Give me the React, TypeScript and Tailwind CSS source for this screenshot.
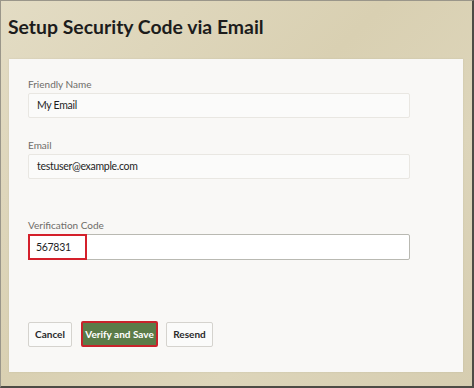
import React from "react";

export default function App() {
  const font = { fontFamily: 'Lato, "Noto Sans", sans-serif' };
  return (
    <div
      className="w-[474px] h-[388px] overflow-hidden border-t border-l border-t-[#9a968a] border-l-[#9a968a] border-r-2 border-b-2 border-r-[#4d4b45] border-b-[#4d4b45] bg-[linear-gradient(135deg,#e3dcc4_0%,#d9d0b2_45%,#ddd5ba_70%,#d6cdb0_100%)] flex flex-col"
      style={font}
    >
      <h1 className="pl-[7px] pt-[13px] h-[58px] text-[19.4px] font-bold text-[#1c1c1c] leading-[26px] whitespace-nowrap">
        Setup Security Code via Email
      </h1>
      <div className="ml-[8px] w-[454px] h-[313px] bg-[#f9f8f6] shadow-[0_0_2px_rgba(0,0,0,0.08)] pl-[19px] flex flex-col">
        <label className="mt-[19px] text-[10px] leading-[12px] text-[#6e6c68]">Friendly Name</label>
        <div className="mt-[3px] w-[382px] h-[25px] border border-[#e9e7e2] bg-[#fbfbfa] rounded-[2px] flex items-center pl-[8px] pt-[1px] text-[10.5px] tracking-[-0.3px] text-[#1e1e1e]">
          My Email
        </div>
        <label className="mt-[21px] text-[10px] leading-[12px] text-[#6e6c68]">Email</label>
        <div className="mt-[3px] w-[382px] h-[25px] border border-[#e9e7e2] bg-[#fbfbfa] rounded-[2px] flex items-center pl-[8px] pt-[1px] text-[10.5px] tracking-[-0.3px] text-[#1e1e1e]">
          testuser@example.com
        </div>
        <label className="mt-[40px] text-[10px] leading-[12px] text-[#6e6c68]">Verification Code</label>
        <div className="relative mt-[3px] w-[382px] h-[26px] border border-[#b9b9b2] bg-white rounded-[2px] flex items-center pl-[7px] pt-[1px] text-[10.5px] tracking-[-0.3px] text-[#1e1e1e]">
          567831
          <div className="absolute left-[-1px] top-[-1px] w-[59px] h-[26px] border-2 border-[#d4202b]" />
        </div>
        <div className="mt-[61px] flex items-center">
          <button className="w-[44px] h-[25px] border border-[#d5d3ce] bg-[#fbfbfa] rounded-[2px] text-[10px] font-bold text-[#2a2a2a] whitespace-nowrap">
            Cancel
          </button>
          <button className="ml-[9px] w-[77px] h-[26px] border-2 border-[#c8232b] bg-[#5b7b48] rounded-[2px] text-[10px] font-bold text-white whitespace-nowrap">
            Verify and Save
          </button>
          <button className="ml-[8px] w-[47px] h-[25px] border border-[#d5d3ce] bg-[#fbfbfa] rounded-[2px] text-[10px] font-bold text-[#2a2a2a] whitespace-nowrap">
            Resend
          </button>
        </div>
      </div>
    </div>
  );
}
